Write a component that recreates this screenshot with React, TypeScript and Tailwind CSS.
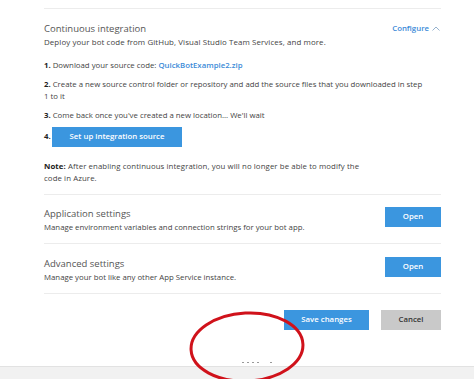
import React from "react";

function Btn({ children, className }: { children: React.ReactNode; className: string }) {
  return (
    <div className={`flex items-center justify-center text-[7.8px] font-semibold ${className}`}>{children}</div>
  );
}

export default function App() {
  return (
    <div className="relative w-[474px] h-[379px] bg-white overflow-hidden flex flex-col font-['Open_Sans',sans-serif] text-[#444]">
      <div className="ml-[44px] mr-[33px] pt-[8px]">
        <div className="h-px bg-[#ececec]" />
        {/* Continuous integration */}
        <div className="mt-[13px] flex items-start justify-between">
          <div className="text-[9.5px] leading-[14px] text-[#555]">Continuous integration</div>
          <div className="flex items-center gap-[3px] text-[7.8px] leading-[14px] font-semibold text-[#3a8ad8] mr-[1px] -mt-[1px]">
            Configure
            <svg width="8" height="5" viewBox="0 0 8 5" fill="none">
              <polyline points="0.5,4.5 4,1 7.5,4.5" stroke="#8aa9c8" strokeWidth="0.9" />
            </svg>
          </div>
        </div>
        <div className="text-[7.9px] leading-[12px] tracking-[0.1px]">Deploy your bot code from GitHub, Visual Studio Team Services, and more.</div>
        <div className="mt-[11px] flex flex-col gap-[7px] text-[7.8px] leading-[12px]">
          <div>
            <span className="font-bold text-[#222]">1.</span> Download your source code:{" "}
            <span className="font-semibold text-[#3a8ad8]">QuickBotExample2.zip</span>
          </div>
          <div className="whitespace-nowrap">
            <span className="font-bold text-[#222]">2.</span> Create a new source control folder or repository and add the source files that you downloaded in step
            <br />1 to it
          </div>
          <div>
            <span className="font-bold text-[#222]">3.</span> Come back once you've created a new location... We'll wait
          </div>
        </div>
        <div className="mt-[6px] flex items-center">
          <span className="w-[8px] text-[7.8px] font-bold text-[#222]">4.</span>
          <Btn className="w-[130px] h-[20px] bg-[#3b96df] text-white">Set up integration source</Btn>
        </div>
        <div className="mt-[13px] text-[7.8px] leading-[12px] tracking-[0.1px] whitespace-nowrap">
          <span className="font-bold text-[#222]">Note:</span> After enabling continuous integration, you will no longer be able to modify the
          <br />code in Azure.
        </div>
        <div className="mt-[10px] h-px bg-[#ececec]" />
        {/* Application settings */}
        <div className="mt-[12px] flex items-start justify-between">
          <div>
            <div className="text-[9.5px] leading-[14px] text-[#555]">Application settings</div>
            <div className="text-[7.8px] leading-[12px]">Manage environment variables and connection strings for your bot app.</div>
          </div>
          <Btn className="w-[56px] h-[20px] bg-[#3b96df] text-white">Open</Btn>
        </div>
        <div className="mt-[10px] h-px bg-[#ececec]" />
        {/* Advanced settings */}
        <div className="mt-[13px] flex items-start justify-between">
          <div>
            <div className="text-[9.5px] leading-[14px] text-[#555]">Advanced settings</div>
            <div className="text-[7.8px] leading-[12px]">Manage your bot like any other App Service instance.</div>
          </div>
          <Btn className="w-[56px] h-[20px] bg-[#3b96df] text-white">Open</Btn>
        </div>
        <div className="mt-[10px] h-px bg-[#ececec]" />
        <div className="mt-[16px] flex justify-end gap-[12px]">
          <Btn className="w-[85px] h-[20px] bg-[#3b96df] text-white">Save changes</Btn>
          <Btn className="w-[60px] h-[20px] bg-[#c9c9c9] text-[#333]">Cancel</Btn>
        </div>
      </div>
      <div className="mt-auto h-[13px] bg-[#f1f1f1] border-t border-[#e2e2e2]" />
      {/* dots */}
      <div className="absolute left-[242px] top-[362px] flex gap-[3px]">
        <span className="w-[2px] h-[1px] bg-[#9a9a9a]" />
        <span className="w-[2px] h-[1px] bg-[#9a9a9a]" />
        <span className="w-[2px] h-[1px] bg-[#9a9a9a]" />
        <span className="w-[2px] h-[1px] bg-[#9a9a9a]" />
        <span className="ml-[8px] w-[2px] h-[1px] bg-[#9a9a9a]" />
      </div>
      {/* red annotation ellipse */}
      <svg className="absolute left-0 top-0 pointer-events-none" width="474" height="379" viewBox="0 0 474 379">
        <ellipse cx="247" cy="347" rx="56" ry="34" fill="none" stroke="#d0121b" strokeWidth="3" transform="rotate(-3 247 347)" />
      </svg>
    </div>
  );
}
